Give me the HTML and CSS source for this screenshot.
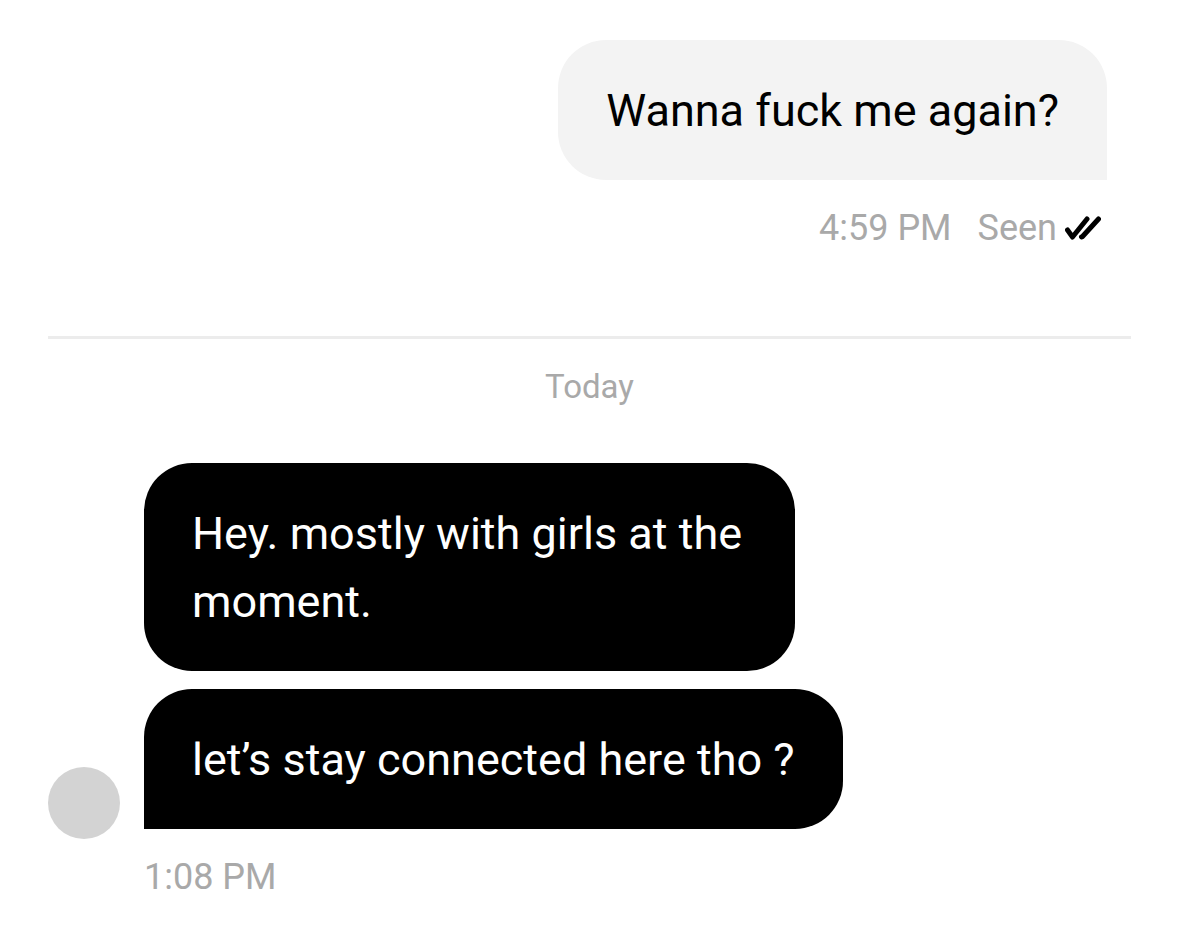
FILE: index.html
```html
<!DOCTYPE html>
<html lang="en">
<head>
    <meta charset="UTF-8">
    <meta name="viewport" content="width=device-width, initial-scale=1.0">
    <title>Chat</title>
    <link rel="stylesheet" href="styles.css">
</head>
<body>
    <main class="chat">
        <section class="sent">
            <p class="bubble bubble-sent">Wanna fuck me again?</p>
            <div class="meta">
                <time>4:59 PM</time>
                <span class="status">
                    Seen
                    <svg class="checks" viewBox="0 0 36 24" aria-hidden="true">
                        <path d="M2.500 14L7.500 21L22 3M17.500 20.500L33.500 3M17.500 20.500L16.500 21"/>
                    </svg>
                </span>
            </div>
        </section>

        <div class="day">Today</div>

        <section class="received">
            <p class="bubble bubble-received bubble-wrapped">Hey. mostly with girls at the moment.</p>
            <div class="last-row">
                <div class="avatar"></div>
                <p class="bubble bubble-received bubble-last">let’s stay connected here tho ?</p>
            </div>
            <div class="meta"><time>1:08 PM</time></div>
        </section>
    </main>
</body>
</html>
```

FILE: styles.css
```css
* {
    box-sizing: border-box;
    margin: 0;
    padding: 0;
}

body {
    font-family: Roboto, "Liberation Sans", sans-serif;
    background-color: #fff;
    color: #000;
}

.chat {
    padding: 40px 48px;
}

.sent {
    display: flex;
    flex-direction: column;
    align-items: flex-end;
    padding-right: 24px;
}

.bubble {
    padding: 37px 48px 35px;
    border-radius: 48px;
    font-size: 45px;
    line-height: 68px;
}

.bubble-sent {
    background-color: #f3f3f3;
    border-bottom-right-radius: 0;
}

.bubble-received {
    background-color: #000;
    color: #fff;
}

.bubble-wrapped {
    width: 66%;
}

.bubble-last {
    border-bottom-left-radius: 0;
}

.meta {
    display: flex;
    gap: 26px;
    margin-top: 24px;
    font-size: 36px;
    line-height: 48px;
    color: #a9a9a9;
}

.status {
    display: flex;
    align-items: center;
    gap: 8px;
    padding-right: 6px;
}

.checks {
    width: 36px;
    height: 24px;
    fill: none;
    stroke: #000;
    stroke-width: 5;
    stroke-linecap: round;
    stroke-linejoin: round;
}

.day {
    margin-top: 84px;
    padding-top: 24px;
    border-top: 3px solid #ececec;
    text-align: center;
    font-size: 33px;
    line-height: 48px;
    color: #a9a9a9;
}

.received {
    display: flex;
    flex-direction: column;
    align-items: flex-start;
    margin-top: 52px;
    padding-left: 96px;
}

.last-row {
    display: flex;
    align-items: flex-end;
    gap: 24px;
    margin-top: 18px;
    margin-left: -96px;
}

/* hangs slightly below the bubble */
.avatar {
    width: 72px;
    height: 72px;
    margin-bottom: -10px;
    border-radius: 50%;
    background-color: #d3d3d3;
}
```
